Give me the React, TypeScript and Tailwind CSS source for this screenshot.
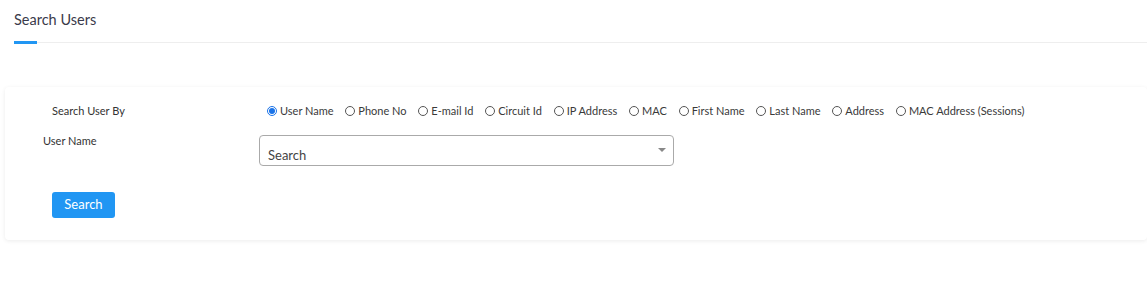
import { useState } from "react";

const options = [
  "User Name",
  "Phone No",
  "E-mail Id",
  "Circuit Id",
  "IP Address",
  "MAC",
  "First Name",
  "Last Name",
  "Address",
  "MAC Address (Sessions)",
];

export default function App() {
  const [by, setBy] = useState("User Name");

  return (
    <div className="min-h-[285px] bg-white font-['Lato','Open_Sans',sans-serif] text-[#333]">
      {/* Page header with tab underline */}
      <div className="pl-[14px] pt-[11px]">
        <div className="text-[14.5px] leading-[18px] text-[#3a3a4a]">Search Users</div>
        <div className="mt-[12px] flex items-center">
          <div className="h-[3px] w-[23px] bg-[#2196f3]" />
          <div className="h-px flex-1 bg-[#eeeeee]" />
        </div>
      </div>

      {/* Card */}
      <div className="ml-[5px] mt-[43px] rounded-[4px] bg-white pb-[22px] pt-[16px] shadow-[0_1px_4px_rgba(0,0,0,0.08)]">
        <div className="flex items-center">
          <div className="w-[262px] pl-[47px] text-[11px] leading-[16px]">Search User By</div>
          <div className="flex items-center gap-[11.8px] text-[11px] leading-[16px] text-[#3a3a3a]">
            {options.map((o) => (
              <label key={o} className="flex cursor-pointer items-center gap-[3px]">
                <span
                  onClick={() => setBy(o)}
                  className={
                    by === o
                      ? "flex h-[10px] w-[10px] items-center justify-center rounded-full border border-[#1a73e8]"
                      : "h-[10px] w-[10px] rounded-full border border-[#555]"
                  }
                >
                  {by === o && <span className="h-[6px] w-[6px] rounded-full bg-[#1a73e8]" />}
                </span>
                <span>{o}</span>
              </label>
            ))}
          </div>
        </div>

        <div className="mt-[14px] flex items-start">
          <div className="w-[254px] pl-[38px] text-[11px] leading-[16px]">User Name</div>
          <div className="relative mt-[2px] h-[31px] w-[415px] rounded-[4px] border border-[#aaaaaa] bg-white">
            <span className="absolute bottom-[1px] left-[8px] text-[13px] leading-[18px] text-[#444]">Search</span>
            <span className="absolute right-[7px] top-[12px] h-0 w-0 border-x-[4px] border-t-[4px] border-x-transparent border-t-[#888]" />
          </div>
        </div>

        <div className="mt-[25px] pl-[47px]">
          <button className="h-[26px] w-[63px] rounded-[3px] bg-[#2196f3] text-[13px] text-white">Search</button>
        </div>
      </div>
    </div>
  );
}
